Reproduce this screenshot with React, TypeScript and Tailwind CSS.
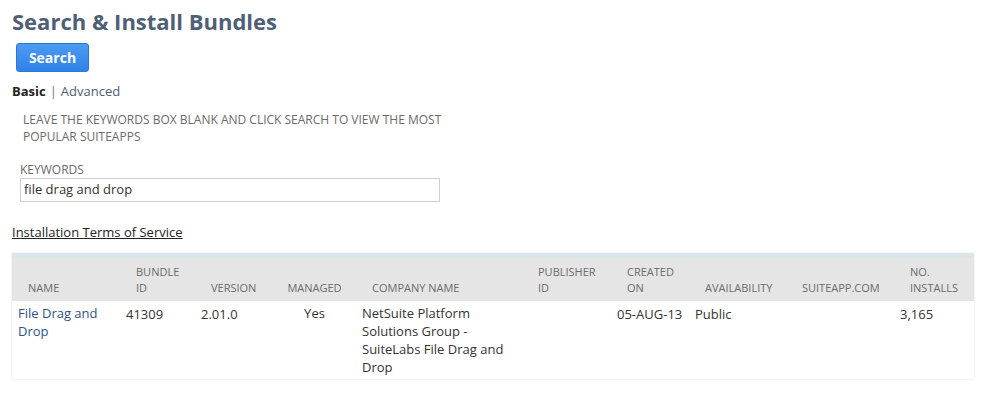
import React from "react";

const cols = [108, 75, 76, 85, 166, 89, 78, 97, 108, 80];

export default function App() {
  const th = "align-bottom text-left font-normal text-[11px] leading-[16px] text-[#6b6b6b] pl-[16px] pr-1 pb-[5px] pt-[6px]";
  const td = "align-top text-[13px] leading-[18px] text-[#333] pl-[6px] pr-1 pt-[4px]";
  return (
    <div className="w-[998px] h-[400px] bg-white overflow-hidden" style={{ fontFamily: '"Open Sans", "Noto Sans", sans-serif' }}>
      <div className="pl-[12px] pt-[6px]">
        <h1 className="text-[22px] leading-[30px] font-bold text-[#4f5f77]">Search &amp; Install Bundles</h1>
        <div className="mt-[7px] pl-[4px]">
          <button className="h-[29px] w-[73px] rounded-[3px] border border-[#2a78d6] bg-gradient-to-b from-[#4c9bf2] to-[#2f82e8] text-white text-[14px] font-bold leading-none">
            Search
          </button>
        </div>
        <div className="mt-[10px] text-[13px] leading-[18px]">
          <span className="font-bold text-[#222]">Basic</span>
          <span className="text-[#777] mx-[4px]">|</span>
          <span className="text-[#4d5e76]">Advanced</span>
        </div>
        <div className="mt-[11px] pl-[11px] w-[460px] text-[12px] leading-[17px] text-[#6a6a6a]">
          LEAVE THE KEYWORDS BOX BLANK AND CLICK SEARCH TO VIEW THE MOST POPULAR SUITEAPPS
        </div>
        <div className="mt-[19px] pl-[8px]">
          <div className="text-[12px] leading-[12px] text-[#6a6a6a]">KEYWORDS</div>
          <div className="mt-[2px] w-[420px] h-[24px] border border-[#cfcfcf] flex items-center pl-[3px] text-[13px] text-[#333]">
            file drag and drop
          </div>
        </div>
        <div className="mt-[22px] text-[13px] leading-[16px] text-[#222] underline">Installation Terms of Service</div>
      </div>
      <div className="ml-[12px] mt-[13px] w-[962px] shadow-[0_0_2px_rgba(0,0,0,0.12)]">
        <div className="h-[5px] bg-[#dbe4e8]" />
        <table className="w-[962px] table-fixed border-collapse">
          <colgroup>
            {cols.map((w, i) => (
              <col key={i} style={{ width: w }} />
            ))}
          </colgroup>
          <thead>
            <tr className="bg-[#e5e5e5] h-[43px]">
              <th className={th}>NAME</th>
              <th className={th}>BUNDLE<br />ID</th>
              <th className={th}>VERSION</th>
              <th className="align-bottom text-center font-normal text-[11px] leading-[16px] text-[#6b6b6b] pb-[5px] pl-[2px]">MANAGED</th>
              <th className={th}>COMPANY NAME</th>
              <th className={th}>PUBLISHER<br />ID</th>
              <th className={th}>CREATED<br />ON</th>
              <th className={th}>AVAILABILITY</th>
              <th className={th}>SUITEAPP.COM</th>
              <th className={th}>NO.<br />INSTALLS</th>
            </tr>
          </thead>
          <tbody>
            <tr>
              <td className="align-top text-[13px] leading-[18px] text-[#2a5589] pl-[6px] pr-[8px] pt-[3px] pb-[3px]">File Drag and Drop</td>
              <td className={td}>41309</td>
              <td className={td}>2.01.0</td>
              <td className="align-top text-center text-[13px] leading-[18px] text-[#333] pt-[3px] pl-[2px]">Yes</td>
              <td className="align-top text-[13px] leading-[18px] text-[#333] pl-[6px] pr-[10px] pt-[3px] pb-[3px]">NetSuite Platform Solutions Group - SuiteLabs File Drag and Drop</td>
              <td className={td}></td>
              <td className={td}>05-AUG-13</td>
              <td className={td}>Public</td>
              <td className={td}></td>
              <td className={td}>3,165</td>
            </tr>
          </tbody>
        </table>
      </div>
    </div>
  );
}
